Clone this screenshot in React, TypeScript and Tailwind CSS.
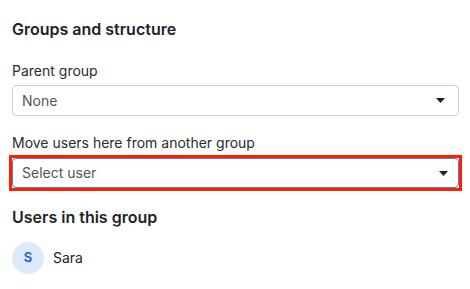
export default function App() {
  return (
    <div className="min-h-[289px] w-[470px] bg-white px-3 pt-[17px] font-['Inter',sans-serif] text-[#1f2328]">
      <h2 className="text-base font-semibold leading-6">Groups and structure</h2>

      <div className="mt-[20px] text-sm leading-5 text-[#2b2b2b]">Parent group</div>
      <div className="mt-1 flex h-[31px] w-[447px] items-center justify-between rounded border border-[#cfcfcf] bg-white pl-[9px] pr-[13px] text-sm text-[#555]">
        <span>None</span>
        <Caret />
      </div>

      <div className="mt-[17px] text-sm leading-5 text-[#2b2b2b]">Move users here from another group</div>
      <div className="-ml-[3px] mt-[2px] w-[453px] border-[3px] border-[#ff1f00]">
        <div className="flex h-[30px] items-center justify-between rounded border border-[#4a7fd6] bg-white pl-[9px] pr-[10px] text-sm text-[#555]">
          <span>Select user</span>
          <Caret />
        </div>
      </div>

      <h3 className="mt-[14px] text-base font-semibold leading-6">Users in this group</h3>
      <div className="mt-[13px] flex items-center gap-[9px]">
        <div className="flex h-8 w-8 items-center justify-center rounded-full bg-[#dce9fb] text-[13px] font-semibold text-[#1d5fc2]">
          S
        </div>
        <span className="text-sm text-[#1f2328]">Sara</span>
      </div>
    </div>
  )
}

function Caret() {
  return (
    <svg width="9" height="5" viewBox="0 0 9 5" aria-hidden>
      <polygon points="0,0 9,0 4.5,5" fill="#222" />
    </svg>
  )
}
